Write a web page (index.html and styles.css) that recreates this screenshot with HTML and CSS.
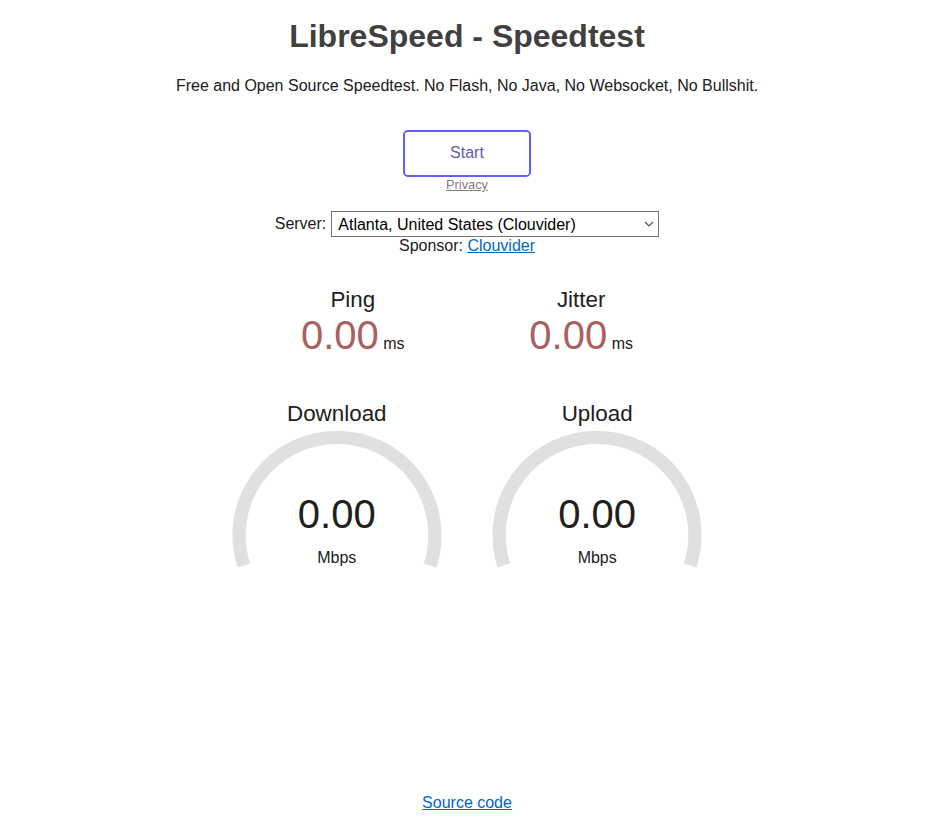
FILE: index.html
```html
<!DOCTYPE html>
<html lang="en">
<head>
    <meta charset="UTF-8">
    <title>LibreSpeed - Speedtest</title>
    <link rel="stylesheet" href="styles.css">
</head>
<body>
<h1>LibreSpeed - Speedtest</h1>
<p class="tagline">Free and Open Source Speedtest. No Flash, No Java, No Websocket, No Bullshit.</p>

<div id="testWrapper">
    <div id="startStopBtn">Start</div>
    <a class="privacy" href="#">Privacy</a>

    <div id="serverArea">
        <span>Server:</span>
        <div class="selectWrap">
            <select id="server">
                <option>Atlanta, United States (Clouvider)</option>
            </select>
            <svg class="chevron" width="10" height="6" viewBox="0 0 10 6">
                <path d="M1 1 L5 5 L9 1" fill="none" stroke="#505050" stroke-width="1.2"/>
            </svg>
        </div>
    </div>
    <div class="sponsor">Sponsor: <a href="#">Clouvider</a></div>

    <div id="test">
        <div class="testGroup">
            <div class="testArea2">
                <div class="testName">Ping</div>
                <div class="meterText ping">0.00</div>
                <div class="unit">ms</div>
            </div>
            <div class="testArea2">
                <div class="testName">Jitter</div>
                <div class="meterText ping">0.00</div>
                <div class="unit">ms</div>
            </div>
        </div>
        <div class="testGroup">
            <div class="testArea">
                <div class="testName">Download</div>
                <svg class="meter" viewBox="0 0 256 200" width="256" height="200">
                    <path d="M34.9 166.5 A97.9 97.9 0 1 1 221.1 166.5" fill="none" stroke="#E0E0E0" stroke-width="13.2"/>
                </svg>
                <div class="meterText">0.00</div>
                <div class="unit">Mbps</div>
            </div>
            <div class="testArea">
                <div class="testName">Upload</div>
                <svg class="meter" viewBox="0 0 256 200" width="256" height="200">
                    <path d="M34.9 166.5 A97.9 97.9 0 1 1 221.1 166.5" fill="none" stroke="#E0E0E0" stroke-width="13.2"/>
                </svg>
                <div class="meterText">0.00</div>
                <div class="unit">Mbps</div>
            </div>
        </div>
    </div>

    <a class="source" href="#">Source code</a>
</div>
</body>
</html>
```

FILE: styles.css
```css
html, body {
    border: none;
    padding: 0;
    margin: 0;
    background: #FFFFFF;
    color: #202020;
}
body {
    margin-right: 5px;
    text-align: center;
    font-family: "Liberation Sans", Arial, sans-serif;
    font-size: 16px;
}
a {
    color: #0066CC;
}
h1 {
    color: #404040;
    font-size: 32px;
    line-height: 37px;
    margin: 18px 0 0;
}
.tagline {
    margin: 22px 0 0;
}
#testWrapper {
    display: flex;
    flex-direction: column;
    align-items: center;
}
#startStopBtn {
    margin-top: 35px;
    color: #6060AA;
    border: 0.15em solid #6060FF;
    border-radius: 0.3em;
    box-sizing: border-box;
    width: 8em;
    height: 47px;
    line-height: 42px;
    cursor: pointer;
}
a.privacy {
    display: block;
    font-size: 0.8em;
    line-height: 16px;
    color: #808080;
}
#serverArea {
    margin-top: 18px;
    display: flex;
    align-items: center;
    justify-content: center;
    gap: 5px;
}
.selectWrap {
    position: relative;
    height: 26px;
}
#server {
    appearance: none;
    font-family: "Liberation Sans", Arial, sans-serif;
    font-size: 16px;
    color: #000;
    width: 328px;
    height: 26px;
    padding: 0 24px 0 6px;
    border: 1px solid #767676;
    border-radius: 0;
    background: #fff;
}
.chevron {
    position: absolute;
    right: 5px;
    top: 10px;
    pointer-events: none;
}
.sponsor {
    margin-top: 0;
}
#test {
    margin-top: 32px;
    margin-bottom: 195px;
}
.testGroup {
    display: flex;
    justify-content: center;
    gap: 4.4px;
}
.testArea2 {
    width: 14em;
    height: 7em;
}
.testArea2 .testName {
    font-size: 1.4em;
}
.testArea2 .meterText {
    display: inline-block;
    font-size: 2.5em;
}
.testArea2 .unit {
    display: inline-block;
}
.meterText.ping {
    color: #AA6060;
}
.testArea {
    width: 16em;
    height: 12.5em;
    position: relative;
}
.testArea .meter {
    display: block;
}
.testArea .testName {
    position: absolute;
    top: 0.1em;
    left: 0;
    width: 100%;
    font-size: 1.4em;
}
.testArea .meterText {
    position: absolute;
    bottom: 1.55em;
    left: 0;
    width: 100%;
    font-size: 2.5em;
}
.testArea .unit {
    position: absolute;
    bottom: 2em;
    left: 0;
    width: 100%;
}
```
